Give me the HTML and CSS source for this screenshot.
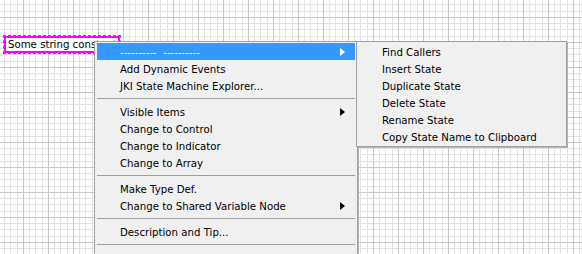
FILE: index.html
```html
<!DOCTYPE html>
<html>
<head>
<meta charset="utf-8">
<link rel="stylesheet" href="styles.css">
</head>
<body>
<div class="canvas">
  <div class="constant">Some string constant</div>

  <div class="menu main">
    <div class="item active"><span class="label">----------  ----------</span><span class="arrow"></span></div>
    <div class="item"><span class="label">Add Dynamic Events</span></div>
    <div class="item"><span class="label">JKI State Machine Explorer...</span></div>
    <div class="sep"></div>
    <div class="item"><span class="label">Visible Items</span><span class="arrow"></span></div>
    <div class="item"><span class="label">Change to Control</span></div>
    <div class="item"><span class="label">Change to Indicator</span></div>
    <div class="item"><span class="label">Change to Array</span></div>
    <div class="sep"></div>
    <div class="item"><span class="label">Make Type Def.</span></div>
    <div class="item"><span class="label">Change to Shared Variable Node</span><span class="arrow"></span></div>
    <div class="sep"></div>
    <div class="item"><span class="label">Description and Tip...</span></div>
    <div class="sep"></div>
  </div>

  <div class="menu sub">
    <div class="item"><span class="label">Find Callers</span></div>
    <div class="item"><span class="label">Insert State</span></div>
    <div class="item"><span class="label">Duplicate State</span></div>
    <div class="item"><span class="label">Delete State</span></div>
    <div class="item"><span class="label">Rename State</span></div>
    <div class="item"><span class="label">Copy State Name to Clipboard</span></div>
  </div>
</div>
</body>
</html>
```

FILE: styles.css
```css
html, body {
  margin: 0;
  padding: 0;
}

body {
  font-family: "DejaVu Sans", "Liberation Sans", sans-serif;
  font-size: 10.2px;
  color: #000;
}

.canvas {
  position: relative;
  width: 582px;
  height: 254px;
  overflow: hidden;
  background-color: #ffffff;
  background-image:
    linear-gradient(to right, #c8c8c8 1px, transparent 1px),
    linear-gradient(to bottom, #c8c8c8 1px, transparent 1px),
    linear-gradient(to right, transparent 6px, #e2e2e2 6px, #e2e2e2 7px, transparent 7px, transparent 12px, #e2e2e2 12px, #e2e2e2 13px, transparent 13px, transparent 19px, #e2e2e2 19px, #e2e2e2 20px, transparent 20px),
    linear-gradient(to bottom, transparent 6px, #e2e2e2 6px, #e2e2e2 7px, transparent 7px, transparent 12px, #e2e2e2 12px, #e2e2e2 13px, transparent 13px, transparent 19px, #e2e2e2 19px, #e2e2e2 20px, transparent 20px);
  background-size: 25px 25px;
  background-position: 23px 17px;
}

.constant {
  position: absolute;
  left: 4px;
  top: 36px;
  box-sizing: border-box;
  width: 116px;
  height: 17px;
  border: 2px solid #ff00ff;
  outline: 1px dashed #4d6fc9;
  background: #ffffff;
  padding: 1px 2px 0;
  line-height: 12px;
  white-space: nowrap;
  overflow: hidden;
}

.menu {
  position: absolute;
  top: 41px;
  box-sizing: border-box;
  background: #f0f0f0;
  border: 1px solid #a0a0a0;
  padding: 1px 2px;
  box-shadow: 1px 1px 0 #b4b4b4;
}

.main {
  left: 94px;
  width: 264px;
  padding-bottom: 20px;
}

.sub {
  left: 356px;
  width: 211px;
}

.item {
  display: flex;
  align-items: center;
  box-sizing: border-box;
  height: 17px;
  padding: 1px 10px 0 23px;
}

.label {
  white-space: pre;
}

.arrow {
  margin-left: auto;
  width: 0;
  height: 0;
  border-top: 4px solid transparent;
  border-bottom: 4px solid transparent;
  border-left: 5px solid #000;
}

.item.active {
  background: #3399ff;
  color: #ffffff;
}

.item.active .arrow {
  border-left-color: #ffffff;
}

.sep {
  height: 9px;
  padding-top: 4px;
  box-sizing: border-box;
}

.sep::before {
  content: "";
  display: block;
  height: 1px;
  background: #a0a0a0;
}
```
